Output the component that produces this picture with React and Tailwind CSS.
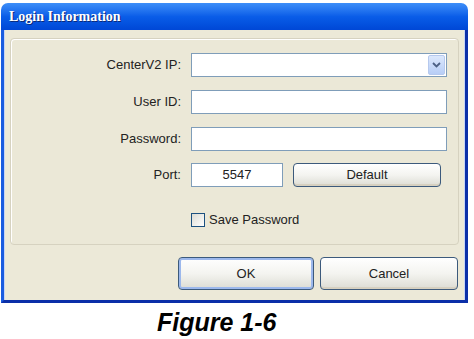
import React from "react";

function Field({ label, children, className = "" }) {
  return (
    <div className={`flex items-center h-[24px] ${className}`}>
      <div className="w-[170px] pr-[0px] text-right text-[13px] text-[#222]">{label}</div>
      <div className="ml-[10px] flex items-center">{children}</div>
    </div>
  );
}

function XpButton({ children, def = false, className = "" }) {
  return (
    <div
      className={`flex items-center justify-center rounded-[4px] border border-[#3c5a7c] bg-gradient-to-b from-[#ffffff] via-[#f4f4f0] to-[#dcdcd4] text-[13px] text-[#222] ${
        def ? "shadow-[inset_0_0_0_2px_#9cb8ec]" : "shadow-[inset_0_-2px_0_#d6d0c0]"
      } ${className}`}
    >
      {children}
    </div>
  );
}

export default function App() {
  return (
    <div
      className="w-[474px] h-[339px] bg-white overflow-hidden"
      style={{ fontFamily: '"Liberation Sans", Arial, sans-serif' }}
    >
      <div className="ml-[1px] pt-[3px] w-[467px]">
        {/* title bar */}
        <div className="h-[27px] rounded-t-[7px] bg-gradient-to-b from-[#3d8ef8] via-[#0a5de8] to-[#0047d6] flex items-center pl-[8px]">
          <span
            className="text-white font-bold text-[14px] [text-shadow:1px_1px_0_#0a2a7a]"
            style={{ fontFamily: '"Liberation Serif", "Times New Roman", serif' }}
          >
            Login Information
          </span>
        </div>
        {/* body */}
        <div className="h-[273px] border-l-[3px] border-r-[3px] border-b-[3px] border-l-[#1a5ce0] border-r-[#0b2fa8] border-b-[#0b2fa8] bg-[#ece9d8]">
          <div className="h-[270px] border-l border-r border-[#c6d4f4] flex flex-col">
            {/* group box */}
            <div className="ml-[5px] mt-[8px] w-[449px] h-[207px] rounded-[4px] border border-[#d6d2c0] shadow-[inset_1px_1px_0_#ffffff] bg-[#ebe8d7] pt-[14px]">
              <Field label="CenterV2 IP:">
                <div className="w-[256px] h-[24px] border border-[#7f9db9] bg-white flex justify-end items-center pr-[1px]">
                  <div className="w-[17px] h-[20px] rounded-[2px] bg-gradient-to-b from-[#dce8fc] to-[#b7cdf6] border border-[#b6c9ee] flex items-center justify-center">
                    <svg width="9" height="6" viewBox="0 0 9 6">
                      <path d="M1 1 L4.5 4.5 L8 1" stroke="#4d6185" strokeWidth="1.8" fill="none" />
                    </svg>
                  </div>
                </div>
              </Field>
              <Field label="User ID:" className="mt-[13px]">
                <div className="w-[256px] h-[24px] border border-[#7f9db9] bg-white" />
              </Field>
              <Field label="Password:" className="mt-[13px]">
                <div className="w-[256px] h-[24px] border border-[#7f9db9] bg-white" />
              </Field>
              <Field label="Port:" className="mt-[12px]">
                <div className="w-[92px] h-[24px] border border-[#7f9db9] bg-white flex items-center justify-center text-[13px] text-[#222]">
                  5547
                </div>
                <XpButton className="ml-[10px] w-[148px] h-[24px]">Default</XpButton>
              </Field>
              <div className="flex items-center mt-[23px] ml-[180px]">
                <div className="w-[14px] h-[14px] border border-[#1c5180] bg-gradient-to-br from-[#dcdcd4] to-[#ffffff]" />
                <span className="ml-[4px] text-[13px] text-[#222]">Save Password</span>
              </div>
            </div>
            {/* buttons */}
            <div className="flex mt-[12px] ml-[173px]">
              <XpButton def className="w-[136px] h-[33px]">OK</XpButton>
              <XpButton className="ml-[6px] w-[138px] h-[33px]">Cancel</XpButton>
            </div>
          </div>
        </div>
      </div>
      <div className="ml-[157px] mt-[4px] text-[25px] font-bold italic text-black leading-[30px]">
        Figure 1-6
      </div>
    </div>
  );
}
